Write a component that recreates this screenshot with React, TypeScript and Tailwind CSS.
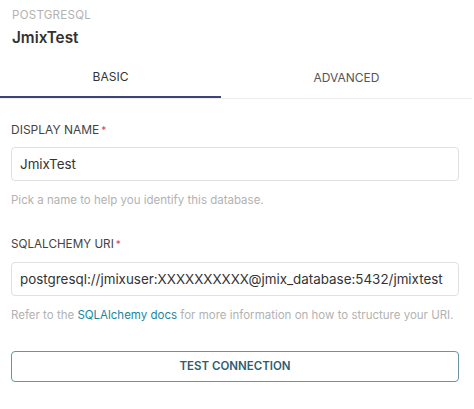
import React from 'react';

export default function App() {
  return (
    <div className="w-[472px] bg-white font-['Inter',sans-serif] text-[#333]">
      {/* Header */}
      <div className="px-3 pt-[9px]">
        <div className="text-[11.5px] leading-[13px] tracking-wide text-[#b2b2b2]">POSTGRESQL</div>
        <div className="mt-[6px] text-[15.3px] leading-[20px] font-semibold text-[#323232]">JmixTest</div>
      </div>

      {/* Tabs */}
      <div className="mt-[9px] flex border-b border-[#ececec]">
        <div className="w-[221px] h-[41px] flex items-center justify-center text-[12px] text-[#333] border-b-2 border-[#3c4574] -mb-px">
          BASIC
        </div>
        <div className="flex-1 h-[41px] flex items-center justify-center text-[12px] text-[#555]">
          ADVANCED
        </div>
      </div>

      {/* Form */}
      <div className="pl-[11px] pr-[13px] pt-[24px]">
        <div className="text-[12px] leading-[14px] text-[#444]">
          DISPLAY NAME<span className="ml-[2px] text-[10px] align-top text-[#e04355]">*</span>
        </div>
        <div className="mt-[10px] h-[34px] rounded-[4px] border border-[#e0e0e0] flex items-center px-[8px] text-[13.4px] text-[#333]">
          JmixTest
        </div>
        <div className="mt-[12px] text-[11.5px] leading-[14px] text-[#b2b2b2]">
          Pick a name to help you identify this database.
        </div>

        <div className="mt-[30px] text-[11.7px] leading-[14px] text-[#444]">
          SQLALCHEMY URI<span className="ml-[2px] text-[10px] align-top text-[#e04355]">*</span>
        </div>
        <div className="mt-[11px] h-[34px] rounded-[4px] border border-[#e0e0e0] flex items-center px-[8px] text-[13.4px] text-[#333] whitespace-nowrap overflow-hidden">
          postgresql://jmixuser:XXXXXXXXXX@jmix_database:5432/jmixtest
        </div>
        <div className="mt-[12px] text-[11.5px] leading-[14px] text-[#b2b2b2] whitespace-nowrap">
          Refer to the <span className="text-[#1a85a0]">SQLAlchemy docs</span> for more information on how to structure your URI.
        </div>

        <button className="mt-[29px] w-full h-[31px] rounded-[4px] border-[1.5px] border-[#6a93a3] bg-white text-[11.5px] font-semibold text-[#2b5e72]">
          TEST CONNECTION
        </button>
      </div>
    </div>
  );
}
